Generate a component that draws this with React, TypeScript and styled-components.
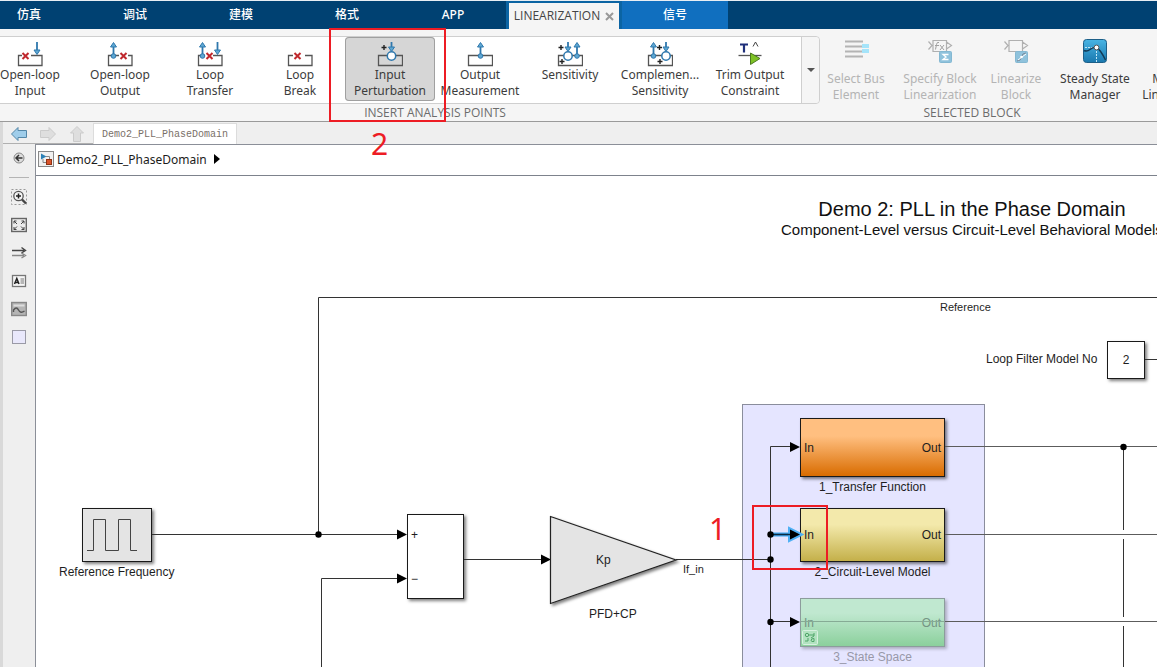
import React from 'react';
import styled, { createGlobalStyle, css } from 'styled-components';

const GlobalStyle = createGlobalStyle`
  *, *::before, *::after { box-sizing: border-box; }
  body { margin: 0; background: #fff; }
  button { font: inherit; color: inherit; background: none; border: 0; padding: 0; margin: 0; }
  svg { display: block; flex: none; }
`;

const ui = `'Noto Sans', 'Noto Sans CJK SC', sans-serif`;
const caps = `'Open Sans', 'Noto Sans', sans-serif`;
const diagram = `'Liberation Sans', Arial, sans-serif`;

const Shell = styled.div`
  position: relative;
  display: flex;
  flex-direction: column;
  height: 100vh;
  overflow: hidden;
  font-family: ${ui};
  font-size: 12px;
  color: #3c3c3c;
`;

/* ---------- tab strip ---------- */

const TabStrip = styled.nav`
  display: flex;
  flex: none;
  height: 29px;
  border-top: 1px solid #e8eef4;
  background: #004172;
`;

const tabBase = css`
  flex: none;
  height: 28px;
  line-height: 28px;
  text-align: center;
`;

const Tab = styled.button<{ $first?: boolean }>`
  ${tabBase}
  width: 106px;
  margin-left: ${p => (p.$first ? '-24px' : '0')};
  color: #fff;
  font-weight: 500;
`;

const ActiveTab = styled.div`
  ${tabBase}
  display: flex;
  align-items: center;
  justify-content: center;
  gap: 5px;
  width: 116px;
  border: solid #0b64a3;
  border-width: 2px 3px 0;
  background: #f5f5f5;
  font-family: ${caps};
  line-height: 24px;
  color: #444;
`;

const ContextTab = styled.button`
  ${tabBase}
  width: 106px;
  background: #106fbf;
  color: #fff;
  font-weight: 500;
`;

/* ---------- ribbon ---------- */

const Ribbon = styled.div`
  display: flex;
  flex: none;
  height: 93px;
  overflow: hidden;
  border-bottom: 1px solid #9a9a9a;
  background: #f5f5f5;
`;

const Section = styled.section<{ $w: number; $bleed?: boolean }>`
  position: relative;
  display: flex;
  flex: none;
  flex-direction: column;
  width: ${p => p.$w}px;
  margin-left: ${p => (p.$bleed ? '-24px' : '0')};
  padding-top: 7px;

  & + &::before {
    content: '';
    position: absolute;
    left: 0;
    top: 8px;
    bottom: 0;
    width: 1px;
    background: #c4c4c4;
  }
`;

const SectionBody = styled.div`
  display: flex;
  height: 70px;
`;

const SectionTitle = styled.div`
  line-height: 16px;
  text-align: center;
  font-family: ${caps};
  color: #6c6c6c;
`;

const Gallery = styled.div`
  display: flex;
  width: 844px;
  height: 68px;
  padding-left: 8px;
  border: 1px solid #cfcfcf;
  border-radius: 4px;
  background: #fff;
`;

const Tool = styled.button<{ $on?: boolean }>`
  display: flex;
  flex: none;
  flex-direction: column;
  align-items: center;
  width: 90px;
  height: 64px;
  padding-top: 4px;
  border-radius: 4px;
  line-height: 16px;
  white-space: nowrap;
  background: ${p => (p.$on ? '#d6d6d6' : 'transparent')};
  box-shadow: ${p => (p.$on ? 'inset 0 0 0 1px #a0a0a0' : 'none')};
`;

const GalleryMore = styled.button`
  display: grid;
  place-items: center;
  width: 18px;
  margin-left: auto;
  border-left: 1px solid #cfcfcf;
  border-radius: 0 4px 4px 0;
  background: #f5f5f5;
`;

const BigTool = styled.button<{ $w: number }>`
  display: flex;
  flex: none;
  flex-direction: column;
  align-items: center;
  gap: 7px;
  width: ${p => p.$w}px;
  padding-top: 2px;
  line-height: 16px;
  white-space: nowrap;
  &:disabled { color: #b4b4b4; }
`;

/* ---------- editor ---------- */

const Editor = styled.div`
  display: flex;
  flex: 1;
  flex-direction: column;
  min-height: 0;
  border-left: 3px solid #d9d9d9;
  background: #efefef;
`;

const NavRow = styled.div`
  display: flex;
  flex: none;
  height: 22px;
`;

const NavButtons = styled.div`
  display: flex;
  align-items: center;
  gap: 13px;
  width: 90px;
  padding: 2px 0 0 8px;
  border-bottom: 1px solid #b0b0b0;
`;

const FileTab = styled.button`
  height: 21px;
  margin-top: 1px;
  padding: 2px 8px 0;
  border: 1px solid #dcdcdc;
  border-bottom: 0;
  background: #fff;
  font-family: 'Liberation Mono', monospace;
  font-size: 10px;
  line-height: 18px;
  color: #7a7068;
`;

const WorkArea = styled.div`
  display: flex;
  flex: 1;
  min-height: 0;
`;

const Palette = styled.aside`
  display: flex;
  flex: none;
  flex-direction: column;
  align-items: center;
  width: 32px;
`;

const PaletteButton = styled.button`
  display: grid;
  place-items: center;
  width: 28px;
  height: 28px;
`;

const PaletteRule = styled.hr`
  width: 20px;
  margin: 5px 0;
  border: 0;
  border-top: 1px solid #b4b4b4;
`;

const Main = styled.main`
  display: flex;
  flex: 1;
  flex-direction: column;
  min-width: 0;
  border: solid #8b8f98;
  border-width: 1px 0 0 1px;
  background: #fff;
`;

const Breadcrumb = styled.div`
  display: flex;
  flex: none;
  align-items: center;
  gap: 3px;
  height: 31px;
  padding: 0 2px 2px;
  border-bottom: 1px solid #7d828c;
  color: #1c1c1c;
`;

const CrumbArrow = styled.svg`
  margin-left: 4px;
`;

const Canvas = styled.div`
  position: relative;
  flex: 1;
  overflow: hidden;
  background: #fff;
  font-family: ${diagram};
  font-size: 12px;
  line-height: 16px;
  color: #1e1e1e;
`;

interface Spot { $x: number; $y: number }

const Zone = styled.div<Spot>`
  position: absolute;
  left: ${p => p.$x}px;
  top: ${p => p.$y}px;
  bottom: -1px;
  width: 243px;
  border: 1px solid #8a8d9c;
  background: #e5e5ff;
`;

const Node = styled.div<Spot>`
  position: absolute;
  left: ${p => p.$x}px;
  top: ${p => p.$y}px;
  display: flex;
  flex-direction: column;
  align-items: center;
  gap: 2px;
  white-space: nowrap;
`;

const Block = styled.div<{ $w: number; $h: number; $fill: string; $dim?: boolean }>`
  position: relative;
  display: flex;
  align-items: center;
  justify-content: space-between;
  width: ${p => p.$w}px;
  height: ${p => p.$h}px;
  padding: 0 3px;
  border: 1px solid ${p => (p.$dim ? '#8c9c9c' : '#1a1a1a')};
  background: ${p => p.$fill};
  box-shadow: 2px 2px 3px ${p => (p.$dim ? 'rgba(0,0,0,.25)' : 'rgba(0,0,0,.5)')};
  color: ${p => (p.$dim ? '#759484' : '#1e1e1e')};
`;

const Caption = styled.div<{ $dim?: boolean }>`
  color: ${p => (p.$dim ? '#9898a8' : 'inherit')};
`;

const Signs = styled.div`
  display: flex;
  flex-direction: column;
  gap: 28px;
`;

const Value = styled.span`
  flex: 1;
  text-align: center;
`;

const VariantMark = styled.svg`
  position: absolute;
  left: 1px;
  bottom: 1px;
`;

const Wires = styled.svg`
  position: absolute;
  inset: 0;
  width: 100%;
  height: 100%;
`;

const Note = styled.div<Spot & { $small?: boolean }>`
  position: absolute;
  left: ${p => p.$x}px;
  top: ${p => p.$y}px;
  white-space: nowrap;
  font-size: ${p => (p.$small ? 11 : 12)}px;
`;

const Heading = styled.div<Spot>`
  position: absolute;
  left: ${p => p.$x}px;
  top: ${p => p.$y}px;
  text-align: center;
  white-space: nowrap;
  font-size: 15px;
  line-height: 18px;
  color: #111;
`;

const HeadingTitle = styled.h1`
  margin: 0;
  font-size: 20px;
  font-weight: 400;
  line-height: 24px;
`;

const Mark = styled.div<Spot & { $w: number; $h: number }>`
  position: absolute;
  left: ${p => p.$x}px;
  top: ${p => p.$y}px;
  width: ${p => p.$w}px;
  height: ${p => p.$h}px;
  border: 2px solid #ed1c24;
  pointer-events: none;
`;

const MarkNumber = styled.div<Spot>`
  position: absolute;
  left: ${p => p.$x}px;
  top: ${p => p.$y}px;
  font-size: 30px;
  line-height: 36px;
  color: #ed1c24;
  font-family: ${ui};
`;

/* ---------- icons ---------- */

const blue = '#2f78ad';
const Cross = ({ x }: { x: number }) => (
  <path d={`M${x - 3} 12l6 6M${x + 3} 12l-6 6`} stroke="#c0282d" strokeWidth="2" />
);
const Up = ({ x }: { x: number }) => (
  <g stroke={blue} fill="#5fa8d3">
    <path d={`M${x} 4V13`} strokeWidth="1.8" />
    <path d={`M${x - 3} 6L${x} 1.5L${x + 3} 6Z`} />
    <circle cx={x} cy="15" r="2.3" />
  </g>
);
const Down = ({ x, tip = 14 }: { x: number; tip?: number }) => (
  <g stroke={blue} fill="#5fa8d3">
    <path d={`M${x} 1V${tip - 3}`} strokeWidth="1.8" />
    <path d={`M${x - 3} ${tip - 5}H${x + 3}L${x} ${tip - 0.5}Z`} />
  </g>
);
const Plus = ({ x, y }: { x: number; y: number }) => (
  <path d={`M${x - 2.5} ${y}h5M${x} ${y - 2.5}v5`} stroke="#222" strokeWidth="1.4" />
);
const Ring = ({ x }: { x: number }) => <circle cx={x} cy="15" r="4.2" fill="#fff" stroke={blue} strokeWidth="1.5" />;
const Base = ({ d = 'M1.5 14.5H25.5V24.5H1.5Z' }: { d?: string }) => <path d={d} fill="none" stroke="#555" strokeWidth="1.3" />;
const Icon = ({ children }: { children: React.ReactNode }) => (
  <svg width="26" height="26" viewBox="0 0 26 26" fill="none">{children}</svg>
);

const tools: { lines: string[]; icon: React.ReactNode; on?: boolean }[] = [
  { lines: ['Open-loop', 'Input'], icon: <><Base d="M5 14.5H1.5V24.5H25V14.5H14" /><Cross x={8.5} /><Down x={20} /></> },
  { lines: ['Open-loop', 'Output'], icon: <><Base d="M12 14.5H1.5V24.5H25V14.5H21" /><Cross x={16.5} /><Up x={6.5} /></> },
  { lines: ['Loop', 'Transfer'], icon: <><Base d="M8 14.5H1.5V24.5H25V14.5H16" /><Cross x={12.5} /><Up x={5.5} /><Down x={20.5} /></> },
  { lines: ['Loop', 'Break'], icon: <><Base d="M6 14.5H1.5V24.5H25V14.5H18" /><Cross x={10.5} /></> },
  { lines: ['Input', 'Perturbation'], on: true, icon: <><Base /><Plus x={7} y={6.5} /><Down x={14.5} tip={11} /><Ring x={14.5} /></> },
  { lines: ['Output', 'Measurement'], icon: <><Base /><Up x={13.5} /></> },
  { lines: ['Sensitivity'], icon: <><Base /><Plus x={4} y={6.5} /><Plus x={5} y={20.5} /><Down x={11} tip={11} /><Up x={20} /><Ring x={11} /></> },
  { lines: ['Complemen...', 'Sensitivity'], icon: <><Base /><Plus x={12.5} y={6.5} /><Plus x={13} y={20.5} /><Up x={6.5} /><Down x={19} tip={11} /><Ring x={19} /></> },
  {
    lines: ['Trim Output', 'Constraint'],
    icon: (
      <>
        <path d="M3 3.5h8M7 3.5v8" stroke="#1f2f7a" strokeWidth="2.2" />
        <path d="M16 5.5L18.5 1L21 5.5" stroke="#444" />
        <path d="M1.5 14.5H24.5" stroke="#555" strokeWidth="1.3" />
        <path d="M13.5 12V23.5L23 17.5Z" fill="#7ec225" stroke="#4c7a20" />
      </>
    ),
  },
];

const SelectBusIcon = () => (
  <svg width="26" height="26" viewBox="0 0 26 26" fill="none">
    <path d="M2 3.5h18M2 8.5h18M2 13.5h18M2 18.5h18" stroke="#b4b4b4" strokeWidth="2" />
    <path d="M19 6h7v4h-7zM19 11h7v4h-7z" fill="#a5e4fa" />
  </svg>
);
const BlockShape = () => (
  <path d="M1.5 3.5L5 7.5L1.5 11.5M6 2.5H19.5V13.5H6ZM19.5 4L24.5 7.5L19.5 11" stroke="#b0b0b0" strokeWidth="1.2" />
);
const SpecifyIcon = () => (
  <svg width="26" height="26" viewBox="0 0 26 26" fill="none">
    <BlockShape />
    <path d="M12 4.5q-2-1-2.500 2l-1 5M8 7.5h4M13 7l4 5M17 7l-4 5" stroke="#a0a0a0" />
    <rect x="12.5" y="13.5" width="12" height="11" rx="1" fill="#8fc2dc" stroke="#84b8d2" />
    <path d="M21.5 16.5H16L19 19L16 21.5H21.5" stroke="#fff" strokeWidth="1.3" />
  </svg>
);
const LinearizeIcon = () => (
  <svg width="26" height="26" viewBox="0 0 26 26" fill="none">
    <BlockShape />
    <rect x="12.5" y="13.5" width="12" height="11" rx="1" fill="#8fc2dc" stroke="#84b8d2" />
    <path d="M14 23q4 0 4.500-4T23 15" stroke="#789" />
    <path d="M15 22L23 16" stroke="#fff" />
    <circle cx="18.5" cy="19" r="1.300" fill="#fff" />
  </svg>
);
const SteadyIcon = () => (
  <svg width="26" height="26" viewBox="0 0 26 26" fill="none">
    <defs>
      <linearGradient id="steady" x1="0" y1="0" x2="0" y2="1">
        <stop offset="0" stopColor="#48b4e4" />
        <stop offset="1" stopColor="#1a78ae" />
      </linearGradient>
    </defs>
    <rect x="1.5" y="1.5" width="23" height="23" rx="3" fill="url(#steady)" stroke="#1d5f88" />
    <path d="M3 9.5H14.5V24" stroke="#bfe6f7" strokeDasharray="2 1" />
    <path d="M2 12.5Q5 14 8 11.5T14.5 9.5Q18 11 23.5 22" stroke="#123a55" strokeWidth="1.400" />
    <circle cx="14.5" cy="9.5" r="2.400" fill="#fff" stroke="#555" />
  </svg>
);

const NavArrow = ({ turn, active }: { turn: number; active?: boolean }) => (
  <svg width="16" height="16" viewBox="0 0 16 16">
    <path
      transform={`rotate(${turn} 8 8)`}
      d="M0.500 8L7 1.500V4.500H15.500V11.500H7V14.500Z"
      fill={active ? '#9fcdea' : '#dedede'}
      stroke={active ? '#5487a8' : '#cbcbcb'}
    />
  </svg>
);

const paletteItems: { label: string; icon: React.ReactNode }[] = [
  {
    label: 'Zoom',
    icon: (
      <>
        <rect x="0.5" y="0.5" width="15" height="15" stroke="#999" strokeDasharray="2 2" />
        <circle cx="7.5" cy="7" r="4.7" fill="#f6f6f6" stroke="#555" strokeWidth="1.3" />
        <path d="M5 7h5M7.5 4.5v5" stroke="#222" strokeWidth="1.5" />
        <path d="M11 10.5L15 14.5" stroke="#444" strokeWidth="2.4" />
      </>
    ),
  },
  {
    label: 'Fit to view',
    icon: (
      <>
        <rect x="0.7" y="1.5" width="14.6" height="13" fill="#ececec" stroke="#666" strokeWidth="1.4" />
        <path d="M3 6.5V4H5.5M3 4l3 3M13 6.5V4H10.5M13 4l-3 3M3 10V12.5H5.5M3 12.5l3-3M13 10V12.5H10.5M13 12.5l-3-3" stroke="#444" />
      </>
    ),
  },
  {
    label: 'Sample time',
    icon: (
      <>
        <path d="M1 5.5H13M10.5 2.5L14.5 5.5L10.5 8" stroke="#444" strokeWidth="1.4" />
        <path d="M1 10.5H13M10.5 8L14.5 10.5L10.5 13" stroke="#888" strokeWidth="1.4" />
      </>
    ),
  },
  {
    label: 'Annotation',
    icon: (
      <>
        <rect x="1.5" y="2.5" width="13" height="11" fill="#f6f6f6" stroke="#777" strokeWidth="1.3" />
        <path d="M3.5 11L5.8 5.5L8 11M4.3 9.5H7.2" stroke="#222" strokeWidth="1.5" />
        <path d="M9.5 6h3.5M9.5 8h3.5M9.5 10h3.5" stroke="#777" />
      </>
    ),
  },
  {
    label: 'Image',
    icon: (
      <>
        <rect x="0.7" y="1.5" width="14.6" height="13" fill="#b4b4b4" stroke="#888" strokeWidth="1.4" />
        <path d="M2.5 3.5h11v2h-11z" fill="#ddd" />
        <path d="M2.5 11V9Q5.5 5 7.5 9T13.5 10" stroke="#555" strokeWidth="1.4" />
      </>
    ),
  },
  { label: 'Area', icon: <rect x="1.5" y="1.5" width="13" height="13" fill="#e9e8fb" stroke="#9a9aa6" /> },
];

const Arrow = ({ x, y }: { x: number; y: number }) => (
  <path d={`M${x} ${y}l-10 -5v10z`} fill="#000" />
);
const Dot = ({ x, y }: { x: number; y: number }) => <circle cx={x} cy={y} r="3.2" fill="#000" />;

export default function App() {
  return (
    <Shell>
      <GlobalStyle />
      <TabStrip>
        {['仿真', '调试', '建模', '格式', 'APP'].map((t, i) => (
          <Tab key={t} $first={i === 0}>{t}</Tab>
        ))}
        <ActiveTab>
          <button>LINEARIZATION</button>
          <button aria-label="Close tab">
            <svg width="9" height="9" viewBox="0 0 9 9"><path d="M1 1l7 7M8 1l-7 7" stroke="#999" strokeWidth="2" /></svg>
          </button>
        </ActiveTab>
        <ContextTab>信号</ContextTab>
      </TabStrip>

      <Ribbon>
        <Section $w={918} $bleed>
          <SectionBody>
            <Gallery>
              {tools.map(t => (
                <Tool key={t.lines.join(' ')} $on={t.on}>
                  <Icon>{t.icon}</Icon>
                  {t.lines.map(l => <span key={l}>{l}</span>)}
                </Tool>
              ))}
              <GalleryMore aria-label="More">
                <svg width="8" height="4" viewBox="0 0 8 4"><path d="M0 0h8L4 4z" fill="#555" /></svg>
              </GalleryMore>
            </Gallery>
            <BigTool $w={72} disabled><SelectBusIcon /><span>Select Bus<br />Element</span></BigTool>
          </SectionBody>
          <SectionTitle>INSERT ANALYSIS POINTS</SectionTitle>
        </Section>
        <Section $w={156}>
          <SectionBody>
            <BigTool $w={92} disabled><SpecifyIcon /><span>Specify Block<br />Linearization</span></BigTool>
            <BigTool $w={60} disabled><LinearizeIcon /><span>Linearize<br />Block</span></BigTool>
          </SectionBody>
          <SectionTitle>SELECTED BLOCK</SectionTitle>
        </Section>
        <Section $w={180}>
          <SectionBody>
            <BigTool $w={90}><SteadyIcon /><span>Steady State<br />Manager</span></BigTool>
            <BigTool $w={60}><SteadyIcon /><span>Model<br />Linearizer</span></BigTool>
          </SectionBody>
        </Section>
      </Ribbon>

      <Editor>
        <NavRow>
          <NavButtons>
            <button aria-label="Back"><NavArrow turn={0} active /></button>
            <button aria-label="Forward"><NavArrow turn={180} /></button>
            <button aria-label="Up"><NavArrow turn={90} /></button>
          </NavButtons>
          <FileTab>Demo2_PLL_PhaseDomain</FileTab>
        </NavRow>
        <WorkArea>
          <Palette>
            <PaletteButton aria-label="Hide browser">
              <svg width="12" height="12" viewBox="0 0 12 12" fill="none">
                <circle cx="6" cy="6" r="5" fill="#ddd" stroke="#888" />
                <path d="M9.5 6H3M6 3L3 6l3 3" stroke="#333" strokeWidth="1.5" />
              </svg>
            </PaletteButton>
            <PaletteRule />
            {paletteItems.map(p => (
              <PaletteButton key={p.label} aria-label={p.label}>
                <svg width="16" height="16" viewBox="0 0 16 16" fill="none">{p.icon}</svg>
              </PaletteButton>
            ))}
          </Palette>
          <Main>
            <Breadcrumb>
              <svg width="16" height="16" viewBox="0 0 16 16">
                <rect x="0.5" y="0.5" width="15" height="15" fill="#f0f0f0" stroke="#888" />
                <path d="M3 2.5V8.5L8.5 5.5Z" fill="#2b7fb5" />
                <path d="M8 5.5h3.5V9M5 8v3.5h4" fill="none" stroke="#888" />
                <rect x="8.5" y="8.5" width="5" height="5" fill="#d9532b" stroke="#8f3213" />
              </svg>
              <span>Demo2_PLL_PhaseDomain</span>
              <CrumbArrow width="6" height="10" viewBox="0 0 6 10"><path d="M0 0L6 5L0 10Z" fill="#000" /></CrumbArrow>
            </Breadcrumb>

            <Canvas>
              <Heading $x={745} $y={21}>
                <HeadingTitle>Demo 2: PLL in the Phase Domain</HeadingTitle>
                Component-Level versus Circuit-Level Behavioral Models
              </Heading>

              <Zone $x={706} $y={228} />

              <Node $x={23} $y={332}>
                <Block $w={70} $h={54} $fill="#e4e4e4">
                  <Value>
                    <svg width="52" height="34" viewBox="0 0 52 34">
                      <path d="M1 32.5H7.5V1.5H19.5V32.5H32.5V1.5H44.5V32.5H51" fill="none" stroke="#444" />
                    </svg>
                  </Value>
                </Block>
                <Caption>Reference Frequency</Caption>
              </Node>

              <Node $x={371} $y={338}>
                <Block $w={57} $h={85} $fill="#fff">
                  <Signs><span>+</span><span>−</span></Signs>
                </Block>
              </Node>

              <Node $x={1071} $y={165}>
                <Block $w={38} $h={38} $fill="#fff"><Value>2</Value></Block>
              </Node>

              <Node $x={764} $y={242}>
                <Block $w={145} $h={59} $fill="linear-gradient(#ffbf80 30%, #d96c00)">
                  <span>In</span><span>Out</span>
                </Block>
                <Caption>1_Transfer Function</Caption>
              </Node>

              <Node $x={764} $y={332}>
                <Block $w={145} $h={54} $fill="linear-gradient(#f3e9ab 30%, #c4b04a)">
                  <span>In</span><span>Out</span>
                </Block>
                <Caption>2_Circuit-Level Model</Caption>
              </Node>

              <Node $x={764} $y={422}>
                <Block $w={145} $h={49} $dim $fill="linear-gradient(#c0e8d0 30%, #8bd09c)">
                  <span>In</span><span>Out</span>
                  <VariantMark width="16" height="15" viewBox="0 0 16 15" fill="none">
                    <rect x="0.5" y="0.5" width="15" height="14" rx="1" fill="#b2e2c0" stroke="#d8f0e0" />
                    <circle cx="5" cy="5" r="1.7" stroke="#4fa568" />
                    <path d="M7 5H12M12 3v3L9 8M3 11h3V8M9 11q0-3 3-2.500v3H9.5" stroke="#4fa568" />
                  </VariantMark>
                </Block>
                <Caption $dim>3_State Space</Caption>
              </Node>

              <Wires>
                <defs>
                  <filter id="soft" x="-20%" y="-20%" width="140%" height="140%">
                    <feDropShadow dx="2" dy="2" stdDeviation="1.5" floodOpacity=".5" />
                  </filter>
                </defs>
                <g fill="none" stroke="#333">
                  <path d="M116 358.5H363" />
                  <path d="M282.5 358.5V121.5H2000" />
                  <path d="M363 402.5H285.5V2000" />
                  <path d="M428 383.5H508" />
                  <path d="M640 383.5H734.5" />
                  <path d="M757 270.5H734.5V2000" />
                  <path d="M734.5 445.5H757" />
                  <path d="M1087.5 270.5V354M1087.5 363V441M1087.5 450V2000" />
                  <path d="M1109 183.5H2000" />
                </g>
                <g fill="none" stroke="#5c5c5c">
                  <path d="M909 270.5H2000M909 358.5H2000M909 445.5H2000" />
                </g>
                <path d="M765 445.5H908" stroke="#86ab95" />
                <path d="M737 358.5H754" stroke="#3fa4ec" strokeWidth="4" />
                <path d="M764 358.5l-10 -5v10z" fill="#4fb0f5" stroke="#4fb0f5" strokeWidth="4" />
                <path d="M734.5 358.5H757" stroke="#0c2a40" strokeWidth="1.5" />
                <Arrow x={371} y={358.5} />
                <Arrow x={371} y={402.5} />
                <Arrow x={515} y={383.5} />
                <Arrow x={764} y={271} />
                <Arrow x={764} y={358.5} />
                <Arrow x={764} y={446} />
                <Dot x={282.5} y={358.5} />
                <Dot x={734.5} y={358.5} />
                <Dot x={734.5} y={383.5} />
                <Dot x={734.5} y={446} />
                <Dot x={1087.5} y={271} />
                <path d="M514.5 340.5L640 384L514.5 427.5Z" fill="#e4e4e4" stroke="#222" strokeWidth="1.2" filter="url(#soft)" />
              </Wires>

              <Note $x={560} $y={376}>Kp</Note>
              <Note $x={553} $y={430}>PFD+CP</Note>
              <Note $x={647} $y={385} $small>If_in</Note>
              <Note $x={904} $y={123} $small>Reference</Note>
              <Note $x={950} $y={175}>Loop Filter Model No</Note>

              <Mark $x={716} $y={329} $w={76} $h={65} />
              <MarkNumber $x={673} $y={335}>1</MarkNumber>
            </Canvas>
          </Main>
        </WorkArea>
      </Editor>

      <Mark $x={329} $y={28} $w={117} $h={94} />
      <MarkNumber $x={371} $y={126}>2</MarkNumber>
    </Shell>
  );
}
